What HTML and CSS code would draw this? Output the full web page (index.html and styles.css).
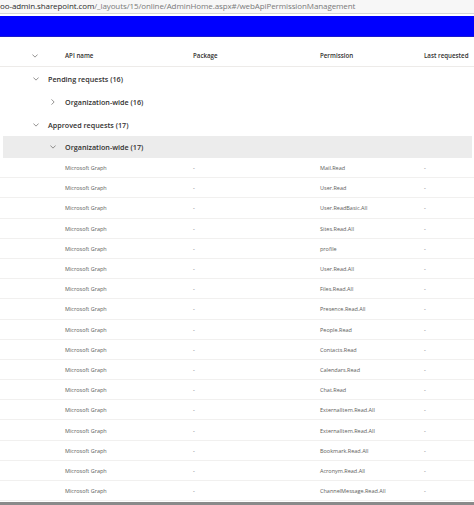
FILE: index.html
```html
<!DOCTYPE html>
<html>
<head>
<meta charset="utf-8">
<link rel="stylesheet" href="styles.css">
</head>
<body>
<div class="urlbar"><span class="host">oo-admin.sharepoint.com</span><span class="path">/_layouts/15/online/AdminHome.aspx#/webApiPermissionManagement</span></div>
<div class="suitebar"></div>
<div class="list">
  <div class="row header">
    <div class="c0"><svg class="chev" viewBox="0 0 8 5"><path d="M0.5 0.5 L4 4 L7.5 0.5"/></svg></div>
    <div class="c1">API name</div>
    <div class="c2">Package</div>
    <div class="c3">Permission</div>
    <div class="c4">Last requested</div>
  </div>
  <div class="group lvl1">
    <svg class="chev" viewBox="0 0 8 5"><path d="M0.5 0.5 L4 4 L7.5 0.5"/></svg>
    <span>Pending requests (16)</span>
  </div>
  <div class="group lvl2">
    <svg class="chev right" viewBox="0 0 5 8"><path d="M0.5 0.5 L4 4 L0.5 7.5"/></svg>
    <span>Organization-wide (16)</span>
  </div>
  <div class="group lvl1">
    <svg class="chev" viewBox="0 0 8 5"><path d="M0.5 0.5 L4 4 L7.5 0.5"/></svg>
    <span>Approved requests (17)</span>
  </div>
  <div class="group lvl2 selected">
    <svg class="chev" viewBox="0 0 8 5"><path d="M0.5 0.5 L4 4 L7.5 0.5"/></svg>
    <span>Organization-wide (17)</span>
  </div>
  <div class="rows">
    <div class="row data"><div class="c0"></div><div class="c1">Microsoft Graph</div><div class="c2">-</div><div class="c3">Mail.Read</div><div class="c4">-</div></div>
    <div class="row data"><div class="c0"></div><div class="c1">Microsoft Graph</div><div class="c2">-</div><div class="c3">User.Read</div><div class="c4">-</div></div>
    <div class="row data"><div class="c0"></div><div class="c1">Microsoft Graph</div><div class="c2">-</div><div class="c3">User.ReadBasic.All</div><div class="c4">-</div></div>
    <div class="row data"><div class="c0"></div><div class="c1">Microsoft Graph</div><div class="c2">-</div><div class="c3">Sites.Read.All</div><div class="c4">-</div></div>
    <div class="row data"><div class="c0"></div><div class="c1">Microsoft Graph</div><div class="c2">-</div><div class="c3">profile</div><div class="c4">-</div></div>
    <div class="row data"><div class="c0"></div><div class="c1">Microsoft Graph</div><div class="c2">-</div><div class="c3">User.Read.All</div><div class="c4">-</div></div>
    <div class="row data"><div class="c0"></div><div class="c1">Microsoft Graph</div><div class="c2">-</div><div class="c3">Files.Read.All</div><div class="c4">-</div></div>
    <div class="row data"><div class="c0"></div><div class="c1">Microsoft Graph</div><div class="c2">-</div><div class="c3">Presence.Read.All</div><div class="c4">-</div></div>
    <div class="row data"><div class="c0"></div><div class="c1">Microsoft Graph</div><div class="c2">-</div><div class="c3">People.Read</div><div class="c4">-</div></div>
    <div class="row data"><div class="c0"></div><div class="c1">Microsoft Graph</div><div class="c2">-</div><div class="c3">Contacts.Read</div><div class="c4">-</div></div>
    <div class="row data"><div class="c0"></div><div class="c1">Microsoft Graph</div><div class="c2">-</div><div class="c3">Calendars.Read</div><div class="c4">-</div></div>
    <div class="row data"><div class="c0"></div><div class="c1">Microsoft Graph</div><div class="c2">-</div><div class="c3">Chat.Read</div><div class="c4">-</div></div>
    <div class="row data"><div class="c0"></div><div class="c1">Microsoft Graph</div><div class="c2">-</div><div class="c3">ExternalItem.Read.All</div><div class="c4">-</div></div>
    <div class="row data"><div class="c0"></div><div class="c1">Microsoft Graph</div><div class="c2">-</div><div class="c3">ExternalItem.Read.All</div><div class="c4">-</div></div>
    <div class="row data"><div class="c0"></div><div class="c1">Microsoft Graph</div><div class="c2">-</div><div class="c3">Bookmark.Read.All</div><div class="c4">-</div></div>
    <div class="row data"><div class="c0"></div><div class="c1">Microsoft Graph</div><div class="c2">-</div><div class="c3">Acronym.Read.All</div><div class="c4">-</div></div>
    <div class="row data"><div class="c0"></div><div class="c1">Microsoft Graph</div><div class="c2">-</div><div class="c3">ChannelMessage.Read.All</div><div class="c4">-</div></div>
  </div>
</div>
<div class="scrollbar"></div>
</body>
</html>
```
FILE: styles.css
```css
html, body {
  margin: 0;
  padding: 0;
  background: #ffffff;
  font-family: "Open Sans", "Noto Sans", sans-serif;
  overflow: hidden;
}
body {
  width: 474px;
  height: 505px;
  position: relative;
}
.urlbar {
  height: 13px;
  line-height: 12px;
  font-size: 8px;
  background: #f7f7f7;
  border-bottom: 1px solid #d6d6d6;
  white-space: nowrap;
  overflow: hidden;
  letter-spacing: -0.1px;
}
.urlbar .host { color: #2b2b2b; }
.urlbar .path { color: #7a7a7a; }
.suitebar {
  margin-top: 2px;
  height: 20px;
  background: #0000ff;
  border-bottom: 1px solid #1a1acc;
}
.list {
  margin-top: 8px;
}
.row {
  display: grid;
  grid-template-columns: 65px 128px 127px 104px 1fr;
  align-items: center;
}
.header {
  height: 21px;
  font-size: 6.2px;
  font-weight: 600;
  color: #323130;
  border-bottom: 1px solid #edebe9;
}
.header .c0 {
  display: flex;
  padding-left: 32px;
}
.chev {
  width: 6px;
  height: 4px;
  fill: none;
  stroke: #605e5c;
  stroke-width: 0.9;
}
.chev.right {
  width: 4px;
  height: 6px;
}
.group {
  height: 23px;
  display: flex;
  align-items: center;
  font-size: 7.2px;
  font-weight: 600;
  color: #323130;
}
.group.lvl1 { padding-left: 33px; }
.group.lvl1 span { margin-left: 9px; }
.group.lvl2 { padding-left: 50px; }
.group.lvl2 .chev.right { margin-left: 1px; }
.group.lvl2 .chev.right + span { margin-left: 10px; }
.group.lvl2 .chev + span { margin-left: 9px; }
.group.selected {
  background: #ececec;
  margin: 0 2px 0 3px;
  padding-left: 47px;
  height: 22px;
}
.data {
  height: 20.2px;
  font-size: 5.5px;
  color: #605e5c;
  border-bottom: 1px solid #f1f0ef;
  box-sizing: border-box;
  padding-top: 1px;
}
.scrollbar {
  position: absolute;
  left: 0;
  right: 0;
  bottom: 0;
  height: 3px;
  background: #8a8a8a;
}
```
